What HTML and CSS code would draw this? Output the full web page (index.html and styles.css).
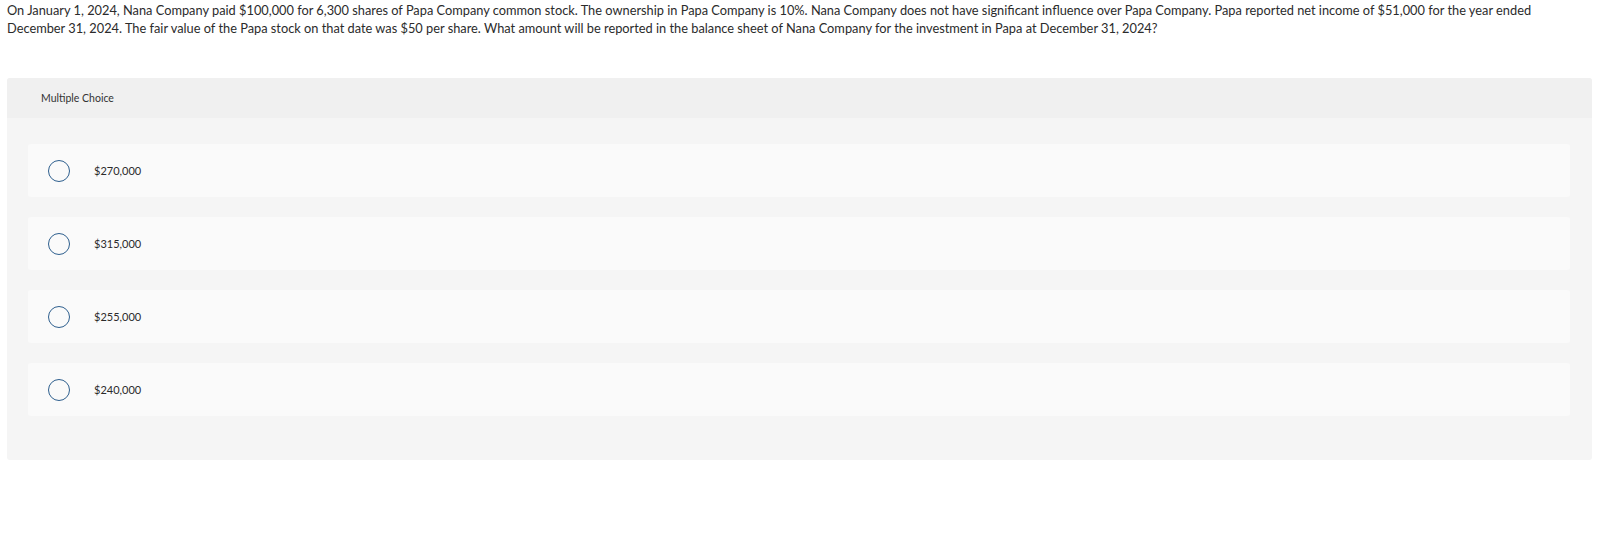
FILE: index.html
```html
<!DOCTYPE html>
<html>
<head>
<meta charset="utf-8">
<link rel="stylesheet" href="styles.css">
</head>
<body>
<div class="page">
  <p class="question">On January 1, 2024, Nana Company paid $100,000 for 6,300 shares of Papa Company common stock. The ownership in Papa Company is 10%. Nana Company does not have significant influence over Papa Company. Papa reported net income of $51,000 for the year ended December 31, 2024. The fair value of the Papa stock on that date was $50 per share. What amount will be reported in the balance sheet of Nana Company for the investment in Papa at December 31, 2024?</p>
  <div class="panel">
    <div class="panel-head">Multiple Choice</div>
    <div class="options">
      <div class="option"><span class="radio"></span><span class="label">$270,000</span></div>
      <div class="option"><span class="radio"></span><span class="label">$315,000</span></div>
      <div class="option"><span class="radio"></span><span class="label">$255,000</span></div>
      <div class="option"><span class="radio"></span><span class="label">$240,000</span></div>
    </div>
  </div>
</div>
</body>
</html>
```
FILE: styles.css
```css
html, body { margin: 0; padding: 0; background: #fff; }
.page {
  padding: 1px 25px 0 7px;
  font-family: Lato, "Liberation Sans", sans-serif;
  color: #2b2b2b;
}
.question {
  margin: 0;
  font-size: 12.8px;
  line-height: 18px;
  max-width: 1540px;
}
.panel {
  margin-top: 41px;
  background: #f5f5f5;
  border-radius: 3px;
  padding-bottom: 44px;
}
.panel-head {
  background: #f0f0f0;
  height: 40px;
  display: flex;
  align-items: center;
  padding-left: 34px;
  font-size: 10.5px;
  color: #333;
  border-radius: 3px 3px 0 0;
}
.options {
  display: flex;
  flex-direction: column;
  gap: 20px;
  padding: 26px 22px 0 21px;
}
.option {
  height: 53px;
  background: #fafafa;
  border-radius: 3px;
  display: flex;
  align-items: center;
  padding-left: 20px;
}
.radio {
  width: 20px;
  height: 20px;
  border: 1.5px solid #2e5f8e;
  border-radius: 50%;
  box-sizing: content-box;
  flex: none;
}
.label {
  margin-left: 24px;
  font-size: 11px;
  color: #2b2b2b;
}
```
